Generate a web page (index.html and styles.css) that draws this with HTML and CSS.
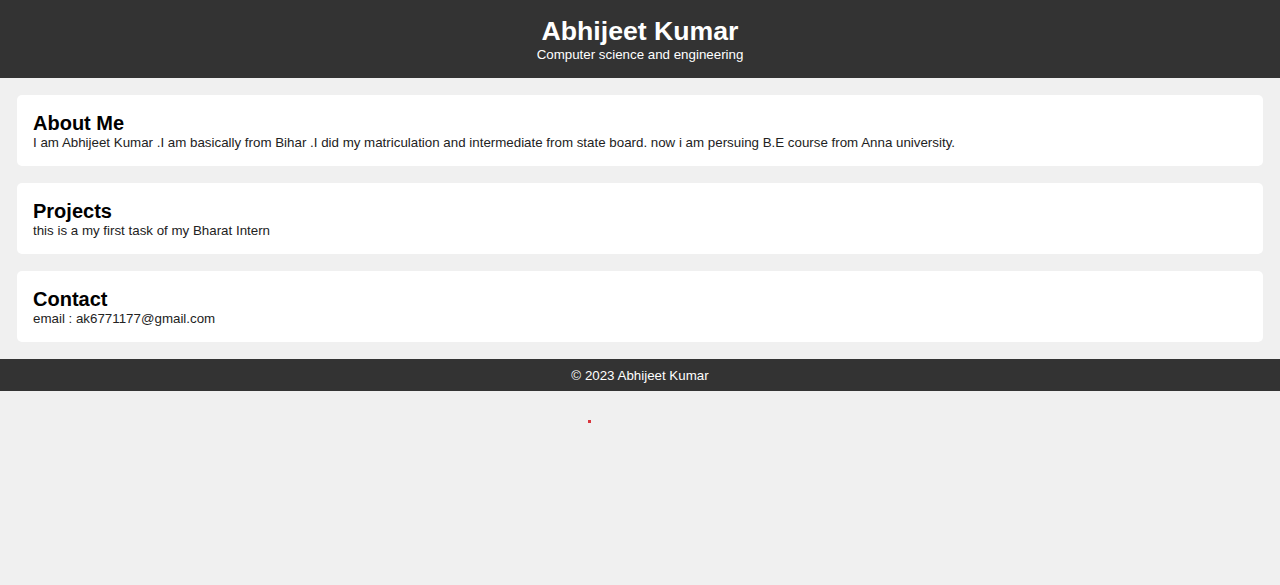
FILE: index.html
```html
<!DOCTYPE html>
<html lang="en">
<head>
    <meta charset="UTF-8">
    <meta name="viewport" content="width=device-width, initial-scale=1.0">
    <title>Abhijeet Kumar - Portfolio</title>
    <link rel="stylesheet" href="styles.css">
</head>
<body>
    <header class="site-header">
        <h1 class="site-title">Abhijeet Kumar</h1>
        <p class="site-subtitle">Computer science and engineering</p>
    </header>

    <main class="content">
        <section class="card">
            <h2 class="card-title">About Me</h2>
            <p class="card-text">I am Abhijeet Kumar .I am basically from Bihar .I did my matriculation and intermediate from state board. now i am persuing B.E course from Anna university.</p>
        </section>

        <section class="card">
            <h2 class="card-title">Projects</h2>
            <p class="card-text">this is a my first task of my Bharat Intern</p>
        </section>

        <section class="card">
            <h2 class="card-title">Contact</h2>
            <p class="card-text">email : ak6771177@gmail.com</p>
        </section>
    </main>

    <footer class="site-footer">
        <p>&copy; 2023 Abhijeet Kumar</p>
    </footer>

    <div class="dot"></div>
</body>
</html>
```

FILE: styles.css
```css
* {
    margin: 0;
    padding: 0;
    box-sizing: border-box;
}

body {
    font-family: 'Liberation Sans', Arial, sans-serif;
    background: #f0f0f0;
    color: #222;
    position: relative;
    min-height: 100vh;
}

.site-header {
    background: #333;
    color: #fff;
    text-align: center;
    padding: 16px 0;
    height: 78px;
}

.site-title {
    font-size: 26.67px;
    font-weight: bold;
    line-height: 31px;
}

.site-subtitle {
    font-size: 13.33px;
    line-height: 15px;
}

.content {
    padding: 17px;
    display: flex;
    flex-direction: column;
    gap: 17px;
}

.card {
    background: #fff;
    border-radius: 5px;
    padding: 17px 16px 15px;
    height: 71px;
}

.card-title {
    font-size: 20px;
    font-weight: bold;
    color: #000;
    line-height: 23px;
}

.card-text {
    font-size: 13.33px;
    line-height: 16px;
}

.site-footer {
    background: #333;
    color: #fff;
    text-align: center;
    font-size: 13.33px;
    height: 32px;
    padding: 9px 0 7px;
    line-height: 16px;
}

.dot {
    position: absolute;
    left: 588px;
    top: 420px;
    width: 3px;
    height: 3px;
    background: #d9363e;
}
```
